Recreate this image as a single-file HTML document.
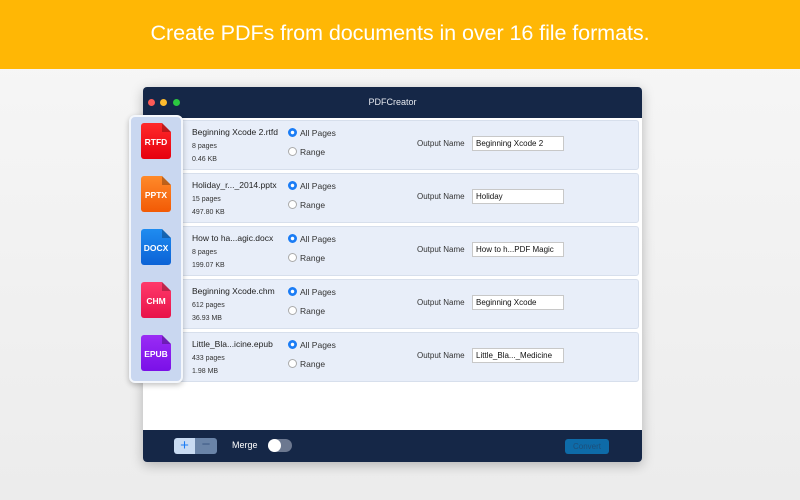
<!DOCTYPE html>
<html><head><meta charset="utf-8"><style>
*{margin:0;padding:0;box-sizing:border-box}
body{width:800px;height:500px;overflow:hidden;font-family:"Liberation Sans",sans-serif;background:linear-gradient(#f7f7f7,#ececec);position:relative}
.banner{position:absolute;left:0;top:0;width:800px;height:69px;background:#ffb705;color:#fff;font-size:21.6px;text-align:center;line-height:66px;letter-spacing:-0.1px}
.win{position:absolute;left:143px;top:87px;width:499px;height:375px;background:#fff;border-radius:4px;overflow:hidden;box-shadow:0 3px 12px rgba(0,0,0,.25)}
.tb{position:absolute;left:0;top:0;width:100%;height:31px;background:#152747;color:#e6e9ef;font-size:9px;text-align:center;line-height:31px}
.dot{position:absolute;top:12px;width:7px;height:7px;border-radius:50%}
.row{position:absolute;left:2px;width:494px;height:50px;background:#e8eef9;border:1px solid #d7dfec;border-radius:3px}
.fn{position:absolute;left:46px;top:6px;font-size:8.5px;color:#222}
.pg{position:absolute;left:46px;top:22px;font-size:7px;color:#333}
.sz{position:absolute;left:46px;top:35px;font-size:7px;color:#333}
.r1,.r2{position:absolute;left:142px;font-size:8.5px;color:#333}
.r1{top:7px}.r2{top:26px}
.rb{display:inline-block;width:9px;height:9px;border-radius:50%;border:1px solid #aaa;background:#fff;vertical-align:-1px;margin-right:3px}
.on2{background:radial-gradient(circle,#fff 1.5px,#1a7cf5 2px)}
.ol{position:absolute;left:271px;top:18px;font-size:8px;color:#333}
.ob{position:absolute;left:326px;top:15px;width:92px;height:15px;background:#fff;border:1px solid #c8c8c8;font-size:8px;color:#111;padding:2px 3px;white-space:nowrap;overflow:hidden}
.ft{position:absolute;left:0;top:343px;width:100%;height:32px;background:#152747}
.side{position:absolute;left:129px;top:115px;width:54px;height:268px;background:#c9d7f0;border:2px solid #f4f7fc;border-radius:6px;box-shadow:0 2px 6px rgba(0,0,0,.25)}
.ic{position:absolute;left:10px;width:30px;height:36px;border-radius:3px;color:#fff;font-size:8.5px;font-weight:bold;text-align:center;line-height:38px;clip-path:polygon(0 0,70% 0,100% 25%,100% 100%,0 100%)}
.ic:after{content:"";position:absolute;right:0;top:0;width:9px;height:9px;background:rgba(0,0,0,.25)}
</style></head><body>
<div class="banner">Create PDFs from documents in over 16 file formats.</div>
<div class="win">
<div class="tb">PDFCreator</div>
<div class="dot" style="left:5px;background:#fc5b57"></div>
<div class="dot" style="left:17px;background:#fdbb2e"></div>
<div class="dot" style="left:30px;background:#2bc840"></div>

<div class="row" style="top:33px"><div class="fn">Beginning Xcode 2.rtfd</div><div class="pg">8 pages</div><div class="sz">0.46 KB</div><div class="r1"><span class="rb on2" style="border-color:#1a7cf5"></span>All Pages</div><div class="r2"><span class="rb"></span>Range</div><div class="ol">Output Name</div><div class="ob">Beginning Xcode 2</div></div>
<div class="row" style="top:86px"><div class="fn">Holiday_r..._2014.pptx</div><div class="pg">15 pages</div><div class="sz">497.80 KB</div><div class="r1"><span class="rb on2" style="border-color:#1a7cf5"></span>All Pages</div><div class="r2"><span class="rb"></span>Range</div><div class="ol">Output Name</div><div class="ob">Holiday</div></div>
<div class="row" style="top:139px"><div class="fn">How to ha...agic.docx</div><div class="pg">8 pages</div><div class="sz">199.07 KB</div><div class="r1"><span class="rb on2" style="border-color:#1a7cf5"></span>All Pages</div><div class="r2"><span class="rb"></span>Range</div><div class="ol">Output Name</div><div class="ob">How to h...PDF Magic</div></div>
<div class="row" style="top:192px"><div class="fn">Beginning Xcode.chm</div><div class="pg">612 pages</div><div class="sz">36.93 MB</div><div class="r1"><span class="rb on2" style="border-color:#1a7cf5"></span>All Pages</div><div class="r2"><span class="rb"></span>Range</div><div class="ol">Output Name</div><div class="ob">Beginning Xcode</div></div>
<div class="row" style="top:245px"><div class="fn">Little_Bla...icine.epub</div><div class="pg">433 pages</div><div class="sz">1.98 MB</div><div class="r1"><span class="rb on2" style="border-color:#1a7cf5"></span>All Pages</div><div class="r2"><span class="rb"></span>Range</div><div class="ol">Output Name</div><div class="ob">Little_Bla..._Medicine</div></div>

<div class="ft">
<div style="position:absolute;left:31px;top:8px;width:21px;height:16px;background:#c9dbf2;border-radius:3px 0 0 3px;color:#1a7cf5;font-size:15px;line-height:15px;text-align:center">+</div>
<div style="position:absolute;left:52px;top:8px;width:22px;height:16px;background:#6a84a8;border-radius:0 3px 3px 0;color:#3d5a85;font-size:15px;line-height:14px;text-align:center">−</div>
<div style="position:absolute;left:89px;top:10px;color:#fff;font-size:9px">Merge</div>
<div style="position:absolute;left:125px;top:9px;width:24px;height:13px;background:#6c7890;border-radius:7px"></div>
<div style="position:absolute;left:125px;top:9px;width:13px;height:13px;background:#fff;border-radius:50%"></div>
<div style="position:absolute;left:422px;top:9px;width:44px;height:15px;background:#0e6ba8;border-radius:3px;color:#1d4f7a;font-size:8px;text-align:center;line-height:15px">Convert</div>
</div>
</div>
<div class="side">
<div class="ic" style="top:6px;background:linear-gradient(#ff2a2a,#e6000f)">RTFD</div>
<div class="ic" style="top:59px;background:linear-gradient(#ff8a2a,#f25a05)">PPTX</div>
<div class="ic" style="top:112px;background:linear-gradient(#1f8cf0,#0b62d6)">DOCX</div>
<div class="ic" style="top:165px;background:linear-gradient(#ff3a6a,#e8124a)">CHM</div>
<div class="ic" style="top:218px;background:linear-gradient(#9a2cf5,#7a10e8)">EPUB</div>
</div>
</body></html>
